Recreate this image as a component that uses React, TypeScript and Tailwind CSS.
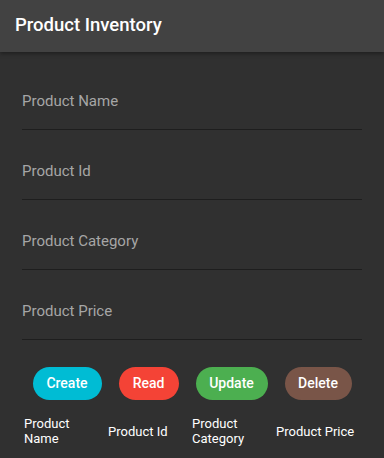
import React from 'react';

const fields = ['Product Name', 'Product Id', 'Product Category', 'Product Price'];

const buttons = [
  { label: 'Create', cls: 'bg-[#00bcd4] w-[69px]' },
  { label: 'Read', cls: 'bg-[#f44336] w-[60px]' },
  { label: 'Update', cls: 'bg-[#4caf50] w-[72px]' },
  { label: 'Delete', cls: 'bg-[#795548] w-[67px]' },
];

const columns = ['Product Name', 'Product Id', 'Product Category', 'Product Price'];

export default function App() {
  return (
    <div
      className="h-[458px] w-[384px] overflow-hidden bg-[#303030]"
      style={{ fontFamily: 'Roboto, "Noto Sans", sans-serif' }}
    >
      <header className="relative z-10 flex h-[52px] items-center bg-[#424242] px-[15px] shadow-[0_2px_4px_rgba(0,0,0,0.35)]">
        <h1 className="text-[18.5px] font-medium text-white">Product Inventory</h1>
      </header>

      <div className="px-[22px] pt-[8px]">
        {fields.map((f) => (
          <div key={f} className="flex h-[70px] items-end border-b border-[#1e1e1e] pb-[18px]">
            <span className="text-[15px] leading-[20px] text-[#a6a6a6]">{f}</span>
          </div>
        ))}
      </div>

      <div className="mt-[27px] flex justify-center gap-[17px]">
        {buttons.map((b) => (
          <button
            key={b.label}
            className={`flex h-[33px] items-center justify-center rounded-full text-[14px] font-medium text-white ${b.cls}`}
          >
            {b.label}
          </button>
        ))}
      </div>

      <div className="mt-[15px] grid grid-cols-[84px_84px_84px_84px] pl-[24px]">
        {columns.map((c) => (
          <div key={c} className="flex h-[32px] items-center text-[13px] leading-[15px] text-white">
            <span className={c === 'Product Price' || c === 'Product Id' ? '' : 'w-[60px]'}>{c}</span>
          </div>
        ))}
      </div>
    </div>
  );
}
